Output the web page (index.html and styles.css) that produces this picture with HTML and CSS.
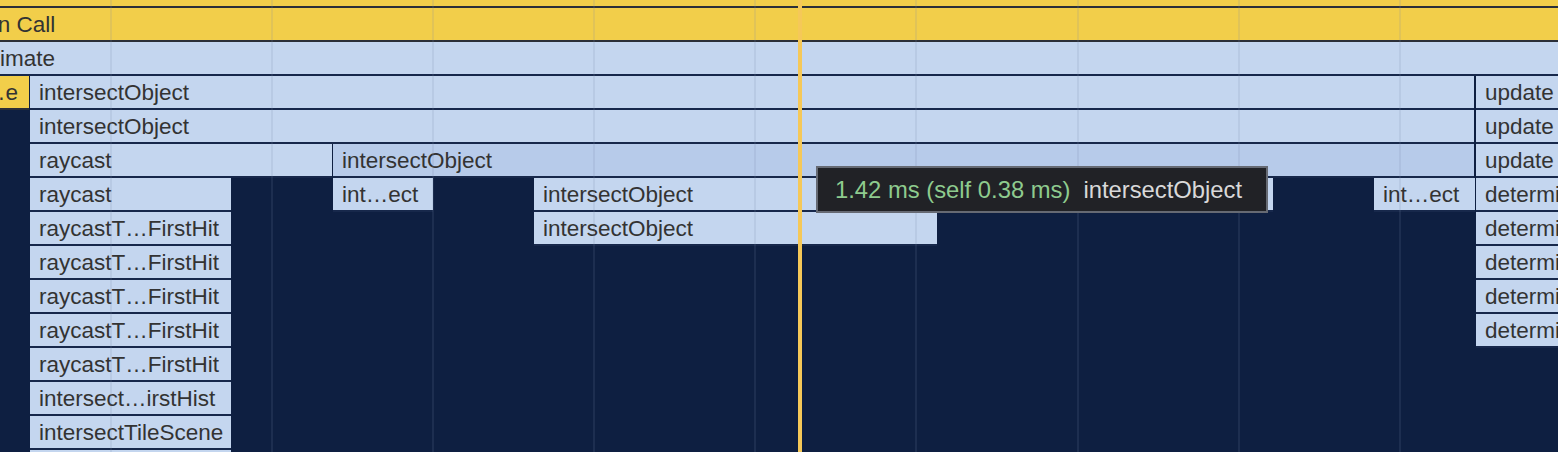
FILE: index.html
```html
<!DOCTYPE html>
<html>
<head>
<meta charset="utf-8">
<link rel="stylesheet" href="styles.css">
</head>
<body>
<div class="chart">
  <div class="rows">
    <div class="row"><div class="bar yellow" style="margin-left:-84px;width:1700px"></div></div>
    <div class="row"><div class="bar yellow" style="margin-left:-85px;width:1700px">Function Call</div></div>
    <div class="row"><div class="bar blue" style="margin-left:-34px;width:1650px">animate</div></div>
    <div class="row">
      <div class="bar yellow" style="margin-left:-26px;width:55px">…e</div>
      <div class="bar blue" style="margin-left:1px;width:1444px">intersectObject</div>
      <div class="bar blue" style="margin-left:2px;width:200px">update</div>
    </div>
    <div class="row">
      <div class="bar blue" style="margin-left:30px;width:1444px">intersectObject</div>
      <div class="bar blue" style="margin-left:2px;width:200px">update</div>
    </div>
    <div class="row">
      <div class="bar blue" style="margin-left:30px;width:302px">raycast</div>
      <div class="bar blue hl" style="margin-left:1px;width:1141px">intersectObject</div>
      <div class="bar blue" style="margin-left:2px;width:200px">update</div>
    </div>
    <div class="row">
      <div class="bar blue" style="margin-left:30px;width:201px">raycast</div>
      <div class="bar blue" style="margin-left:102px;width:100px">int…ect</div>
      <div class="bar blue" style="margin-left:101px;width:739px">intersectObject</div>
      <div class="bar blue" style="margin-left:101px;width:101px">int…ect</div>
      <div class="bar blue" style="margin-left:1px;width:200px">determine</div>
    </div>
    <div class="row">
      <div class="bar blue" style="margin-left:30px;width:201px">raycastT…FirstHit</div>
      <div class="bar blue" style="margin-left:303px;width:403px">intersectObject</div>
      <div class="bar blue" style="margin-left:539px;width:200px">determine</div>
    </div>
    <div class="row">
      <div class="bar blue" style="margin-left:30px;width:201px">raycastT…FirstHit</div>
      <div class="bar blue" style="margin-left:1245px;width:200px">determine</div>
    </div>
    <div class="row">
      <div class="bar blue" style="margin-left:30px;width:201px">raycastT…FirstHit</div>
      <div class="bar blue" style="margin-left:1245px;width:200px">determine</div>
    </div>
    <div class="row">
      <div class="bar blue" style="margin-left:30px;width:201px">raycastT…FirstHit</div>
      <div class="bar blue" style="margin-left:1245px;width:200px">determine</div>
    </div>
    <div class="row">
      <div class="bar blue" style="margin-left:30px;width:201px">raycastT…FirstHit</div>
    </div>
    <div class="row">
      <div class="bar blue" style="margin-left:30px;width:201px">intersect…irstHist</div>
    </div>
    <div class="row">
      <div class="bar blue" style="margin-left:30px;width:201px">intersectTileScene</div>
    </div>
    <div class="row">
      <div class="bar blue" style="margin-left:30px;width:201px">intersectTile</div>
    </div>
  </div>

  <div class="grid">
    <div class="gline" style="left:110px"></div>
    <div class="gline" style="left:271px"></div>
    <div class="gline" style="left:432px"></div>
    <div class="gline" style="left:593px"></div>
    <div class="gline" style="left:754px"></div>
    <div class="gline" style="left:915px"></div>
    <div class="gline" style="left:1077px"></div>
    <div class="gline" style="left:1238px"></div>
    <div class="gline" style="left:1399px"></div>
  </div>

  <div class="cursor"></div>

  <div class="tooltip">
    <span class="t-time">1.42 ms (self 0.38 ms)</span>
    <span class="t-name">intersectObject</span>
  </div>
</div>
</body>
</html>
```

FILE: styles.css
```css
html, body {
  margin: 0;
  padding: 0;
  width: 1558px;
  height: 452px;
  overflow: hidden;
  background: #0e1f41;
}

.chart {
  position: relative;
  width: 1558px;
  height: 452px;
  overflow: hidden;
  font-family: "Liberation Sans", Arial, Helvetica, sans-serif;
  font-size: 22.5px;
  color: #333;
}

.rows {
  display: flex;
  flex-direction: column;
  margin-top: -26px;
}

.row {
  display: flex;
  height: 34px;
  flex: none;
}

.bar {
  flex: none;
  box-sizing: border-box;
  height: 34px;
  line-height: 33px;
  padding-left: 9px;
  white-space: nowrap;
  overflow: hidden;
}

.yellow {
  background: #f2ce4a;
  border-bottom: 2px solid #2b2f38;
}

.blue {
  background: #c4d6ef;
  border-bottom: 2px solid #17284b;
}

.blue.hl {
  background: #b7cbea;
}

.grid {
  position: absolute;
  inset: 0;
  pointer-events: none;
}

.gline {
  position: absolute;
  top: 0;
  bottom: 0;
  width: 2px;
  background: rgba(120, 135, 165, 0.15);
}

.cursor {
  position: absolute;
  top: 0;
  bottom: 0;
  left: 798px;
  width: 4px;
  background: #f5c858;
}

.tooltip {
  position: absolute;
  left: 816px;
  top: 166px;
  width: 452px;
  height: 47px;
  box-sizing: border-box;
  border: 2px solid rgba(160, 166, 178, 0.55);
  background: #212226;
  display: flex;
  align-items: center;
  gap: 13px;
  padding-left: 17px;
  font-size: 23.8px;
  white-space: nowrap;
}

.t-time {
  color: #8ecb8e;
}

.t-name {
  color: #d9d9d9;
}
```
